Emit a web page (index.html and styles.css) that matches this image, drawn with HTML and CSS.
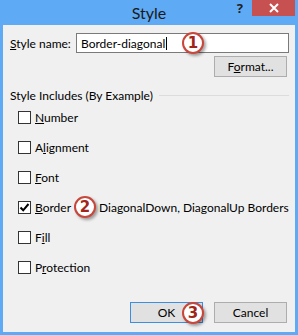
FILE: index.html
```html
<!DOCTYPE html>
<html lang="en">

<head>
    <meta charset="UTF-8">
    <meta name="viewport" content="width=device-width, initial-scale=1.0">
    <title>Style</title>
    <link rel="stylesheet" href="styles.css">
</head>

<body>
    <div class="window">
        <div class="titlebar">
            <div class="spacer"></div>
            <div class="title">Style</div>
            <div class="controls">
                <span class="help">?</span>
                <span class="close">
                    <svg width="10" height="10" viewBox="0 0 10 10">
                        <path d="M1 1 L9 9 M9 1 L1 9" stroke="#fff" stroke-width="2" />
                    </svg>
                </span>
            </div>
        </div>

        <div class="content">
            <div class="name-row">
                <label class="name-label"><u>S</u>tyle name:</label>
                <div class="name-input">
                    <span class="value">Border-diagonal</span><span class="caret"></span>
                    <span class="badge badge-name">1</span>
                </div>
            </div>

            <div class="format-row">
                <button class="btn">F<u>o</u>rmat...</button>
            </div>

            <div class="group-head">
                <span>Style Includes (By Example)</span>
                <div class="rule"></div>
            </div>

            <div class="check-row"><span class="box"></span><span><u>N</u>umber</span></div>
            <div class="check-row"><span class="box"></span><span>A<u>l</u>ignment</span></div>
            <div class="check-row"><span class="box"></span><span><u>F</u>ont</span></div>
            <div class="check-row">
                <span class="box checked">
                    <svg width="11" height="11" viewBox="0 0 11 11">
                        <path d="M1.5 5.5 L4.2 8.3 L9.5 2" fill="none" stroke="#000" stroke-width="2" />
                    </svg>
                </span>
                <span><u>B</u>order</span>
                <span class="badge badge-inline">2</span>
                <span class="detail">DiagonalDown, DiagonalUp Borders</span>
            </div>
            <div class="check-row"><span class="box"></span><span>F<u>i</u>ll</span></div>
            <div class="check-row"><span class="box"></span><span>P<u>r</u>otection</span></div>

            <div class="actions">
                <button class="btn btn-default">OK<span class="badge badge-ok">3</span></button>
                <button class="btn">Cancel</button>
            </div>
        </div>
    </div>
</body>

</html>
```

FILE: styles.css
```css
body {
    margin: 0;
    background-color: #5faaf4;
    font-family: Lato, "Noto Sans", sans-serif;
    font-size: 12px;
    color: #000;
}

.window {
    width: 298px;
    height: 335px;
    box-sizing: border-box;
    padding: 0 3px 3px 3px;
    background-color: #5faaf4;
}

.titlebar {
    height: 25px;
    display: grid;
    grid-template-columns: 65px 1fr 65px;
    align-items: start;
}

.title {
    text-align: center;
    font-size: 16px;
    line-height: 25px;
    color: #1a1a1a;
}

.controls {
    display: flex;
    justify-content: flex-end;
    align-items: center;
}

.help {
    font-family: "Noto Sans", sans-serif;
    font-weight: bold;
    font-size: 13px;
    color: #222;
    margin-right: 9px;
    line-height: 16px;
}

.close {
    width: 43px;
    height: 16px;
    background-color: #c75050;
    display: flex;
    align-items: center;
    justify-content: center;
}

.content {
    height: 307px;
    box-sizing: border-box;
    background-color: #f0f0f0;
    padding: 8px 6px 0 7px;
}

.name-row {
    display: flex;
    align-items: center;
    height: 20px;
}

.name-label {
    width: 66px;
    flex-shrink: 0;
}

.name-input {
    flex: 1;
    height: 20px;
    box-sizing: border-box;
    border: 1px solid #7a7a7a;
    background-color: #fff;
    display: flex;
    align-items: center;
    padding-left: 4px;
    position: relative;
}

.caret {
    width: 1px;
    height: 13px;
    background-color: #000;
    margin-left: 1px;
}

.format-row {
    display: flex;
    justify-content: flex-end;
    margin-top: 3px;
    padding-right: 2px;
}

.btn {
    width: 73px;
    height: 21px;
    border: 1px solid #adadad;
    background-color: #e1e1e1;
    font-family: inherit;
    font-size: 12px;
    padding: 0;
    color: #000;
    position: relative;
}

.btn-default {
    border-color: #3c8fe0;
}

.group-head {
    display: flex;
    align-items: center;
    margin-top: 12px;
    height: 13px;
}

.rule {
    flex: 1;
    height: 1px;
    background-color: #dcdcdc;
    margin-left: 6px;
}

.check-row {
    display: flex;
    align-items: center;
    height: 30px;
    padding-left: 8px;
    white-space: nowrap;
}

.box {
    width: 13px;
    height: 13px;
    box-sizing: border-box;
    border: 1px solid #333;
    background-color: #fff;
    margin-right: 4px;
    display: flex;
    align-items: center;
    justify-content: center;
}

.detail {
    margin-left: 3px;
}

.badge {
    width: 18px;
    height: 18px;
    border-radius: 50%;
    border: 2px solid #c8463a;
    background-color: #fff;
    color: #a0261b;
    font-family: "DejaVu Sans", sans-serif;
    font-weight: bold;
    font-size: 15px;
    line-height: 18px;
    text-align: center;
    box-shadow: 2px 2px 3px rgba(0, 0, 0, 0.35);
    display: inline-block;
}

.badge-name {
    position: absolute;
    left: 105px;
    top: -2px;
}

.badge-inline {
    margin-left: 3px;
}

.badge-ok {
    position: absolute;
    left: 51px;
    top: -1px;
}

.actions {
    display: flex;
    justify-content: flex-end;
    gap: 11px;
    padding-right: 2px;
    margin-top: 20px;
}
```
